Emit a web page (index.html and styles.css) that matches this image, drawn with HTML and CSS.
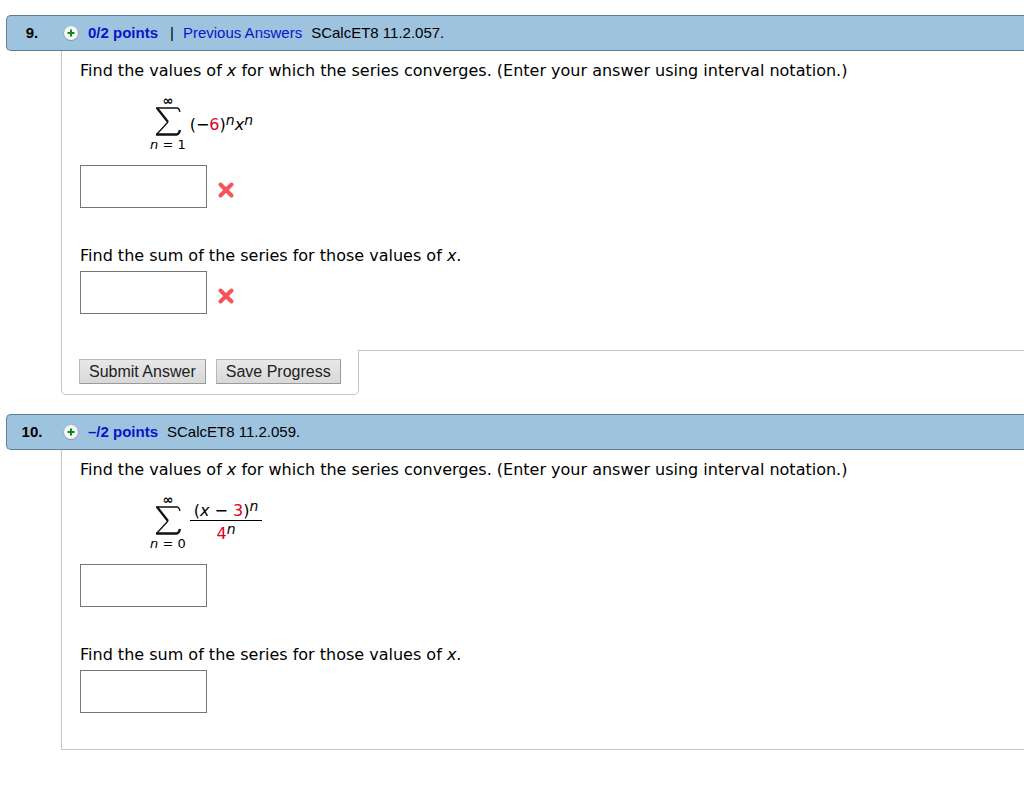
FILE: index.html
```html
<!DOCTYPE html>
<html lang="en">
<head>
    <meta charset="UTF-8">
    <meta name="viewport" content="width=device-width, initial-scale=1.0">
    <title>SCalcET8 11.2</title>
    <link rel="stylesheet" href="styles.css">
</head>
<body>
    <main class="assignment">
        <section class="question">
            <div class="question-header">
                <span class="number">9.</span>
                <svg class="plus" viewBox="0 0 16 16" aria-hidden="true">
                    <circle class="shade" cx="8" cy="8.5" r="7.5" />
                    <circle class="disc" cx="8" cy="8" r="7" />
                    <path d="M8 4.5v7M4.5 8h7" />
                </svg>
                <a href="#" class="points">0/2 points</a>
                <span class="divider">|</span>
                <a href="#" class="previous">Previous Answers</a>
                <span class="source">SCalcET8 11.2.057.</span>
            </div>

            <div class="question-body">
                <p><label for="q9-interval">Find the values of <i>x</i> for which the series converges. (Enter your answer using interval notation.)</label></p>
                <div class="series">
                    <div class="sum">
                        <span class="upper">∞</span>
                        <svg class="sigma" viewBox="0 0 26 29" aria-hidden="true">
                            <path class="thin" d="M1 1H22Q24 1 25 5M13 15L2 27" />
                            <path class="thick" d="M2 1L13 15M1 27.5H22Q24 27 25 23" />
                        </svg>
                        <span class="lower"><i>n</i> = 1</span>
                    </div>
                    <div class="term">(−<span class="value">6</span>)<sup>n</sup><i>x</i><sup>n</sup></div>
                </div>
                <div class="answer">
                    <input type="text" id="q9-interval">
                    <svg class="wrong" viewBox="0 0 18 18" aria-hidden="true">
                        <path d="M3.5 3.5L14.5 14.5M14.5 3.5L3.5 14.5" />
                    </svg>
                </div>
                <p class="second"><label for="q9-sum">Find the sum of the series for those values of <i>x</i>.</label></p>
                <div class="answer">
                    <input type="text" id="q9-sum">
                    <svg class="wrong" viewBox="0 0 18 18" aria-hidden="true">
                        <path d="M3.5 3.5L14.5 14.5M14.5 3.5L3.5 14.5" />
                    </svg>
                </div>
            </div>

            <div class="question-footer">
                <div class="actions">
                    <button type="button">Submit Answer</button>
                    <button type="button">Save Progress</button>
                </div>
                <div class="rule"></div>
            </div>
        </section>

        <section class="question">
            <div class="question-header">
                <span class="number">10.</span>
                <svg class="plus" viewBox="0 0 16 16" aria-hidden="true">
                    <circle class="shade" cx="8" cy="8.5" r="7.5" />
                    <circle class="disc" cx="8" cy="8" r="7" />
                    <path d="M8 4.5v7M4.5 8h7" />
                </svg>
                <a href="#" class="points">–/2 points</a>
                <span class="source">SCalcET8 11.2.059.</span>
            </div>

            <div class="question-body last">
                <p><label for="q10-interval">Find the values of <i>x</i> for which the series converges. (Enter your answer using interval notation.)</label></p>
                <div class="series">
                    <div class="sum">
                        <span class="upper">∞</span>
                        <svg class="sigma" viewBox="0 0 26 29" aria-hidden="true">
                            <path class="thin" d="M1 1H22Q24 1 25 5M13 15L2 27" />
                            <path class="thick" d="M2 1L13 15M1 27.5H22Q24 27 25 23" />
                        </svg>
                        <span class="lower"><i>n</i> = 0</span>
                    </div>
                    <div class="fraction">
                        <div class="numerator">(<i>x</i> − <span class="value">3</span>)<sup>n</sup></div>
                        <div class="denominator"><span class="value">4</span><sup>n</sup></div>
                    </div>
                </div>
                <div class="answer">
                    <input type="text" id="q10-interval">
                </div>
                <p class="second"><label for="q10-sum">Find the sum of the series for those values of <i>x</i>.</label></p>
                <div class="answer">
                    <input type="text" id="q10-sum">
                </div>
            </div>
        </section>
    </main>
</body>
</html>
```
FILE: styles.css
```css
* {
    margin: 0;
    padding: 0;
    box-sizing: border-box;
}

body {
    font-family: Verdana, "DejaVu Sans", sans-serif;
    font-size: 16px;
    line-height: 20px;
    color: #000;
    background: #fff;
}

.assignment {
    padding: 15px 0 20px 6px;
}

.question {
    margin-bottom: 19px;
}

.question-header {
    display: flex;
    align-items: center;
    height: 36px;
    background: #9ec3df;
    border: 1px solid #5f8093;
    border-right: none;
    border-radius: 5px 0 0 5px;
    font-family: Arial, "Liberation Sans", sans-serif;
    font-size: 15px;
}

.question-header a {
    color: #0a14cc;
    text-decoration: none;
}

.number {
    width: 50px;
    text-align: center;
    font-weight: bold;
}

.plus {
    width: 16px;
    height: 16px;
    margin: 0 9px 0 6px;
}

.plus .shade {
    fill: #8d9aa3;
}

.plus .disc {
    fill: #f8f8f8;
}

.plus path {
    stroke: #0d8a12;
    stroke-width: 2;
}

.points {
    font-weight: bold;
}

.divider {
    margin: 0 9px 0 12px;
}

.source {
    margin-left: 9px;
}

.question-body {
    margin-left: 55px;
    padding: 10px 18px 36px;
    border-left: 1px solid #c4c4c4;
}

.question-body.last {
    border-bottom: 1px solid #c4c4c4;
}

.series {
    display: flex;
    align-items: center;
    gap: 4px;
    margin: 14px 0 11px 70px;
}

.sum {
    display: flex;
    flex-direction: column;
    align-items: center;
    font-size: 13px;
}

.upper {
    line-height: 12px;
    font-weight: bold;
}

.sigma {
    width: 26px;
    height: 29px;
    fill: none;
    stroke: #111;
}

.sigma .thin {
    stroke-width: 1.3;
}

.sigma .thick {
    stroke-width: 2.3;
}

.lower {
    line-height: 18px;
}

sup {
    font-size: 14px;
    font-style: italic;
    line-height: 0;
    vertical-align: 5px;
}

.value {
    color: #e0001b;
}

.fraction {
    padding-top: 2px;
    text-align: center;
}

.numerator {
    padding: 0 4px;
    border-bottom: 1px solid #000;
    line-height: 18px;
}

.denominator {
    line-height: 26px;
}

.answer {
    display: flex;
    align-items: center;
    gap: 10px;
}

.answer input {
    width: 127px;
    height: 43px;
    padding: 0 8px;
    border: 1px solid #767676;
    font-size: 16px;
}

.wrong {
    width: 18px;
    height: 18px;
    margin-top: 6px;
}

.wrong path {
    stroke: #f4535a;
    stroke-width: 4;
    stroke-linecap: round;
}

.second {
    margin: 38px 0 5px;
}

.question-footer {
    display: flex;
    margin-left: 55px;
}

.actions {
    display: flex;
    gap: 10px;
    padding: 9px 17px 10px;
    border: 1px solid #c4c4c4;
    border-top: none;
    border-radius: 0 0 5px 5px;
}

.actions button {
    height: 25px;
    padding: 0 9px;
    background: linear-gradient(#e8e8e8, #d8d8d8);
    border: 1px solid #b8b8b8;
    border-right-color: #999;
    border-bottom-color: #999;
    font-family: Arial, "Liberation Sans", sans-serif;
    font-size: 16px;
    color: #222;
}

.rule {
    flex: 1;
    border-top: 1px solid #c4c4c4;
}
```
